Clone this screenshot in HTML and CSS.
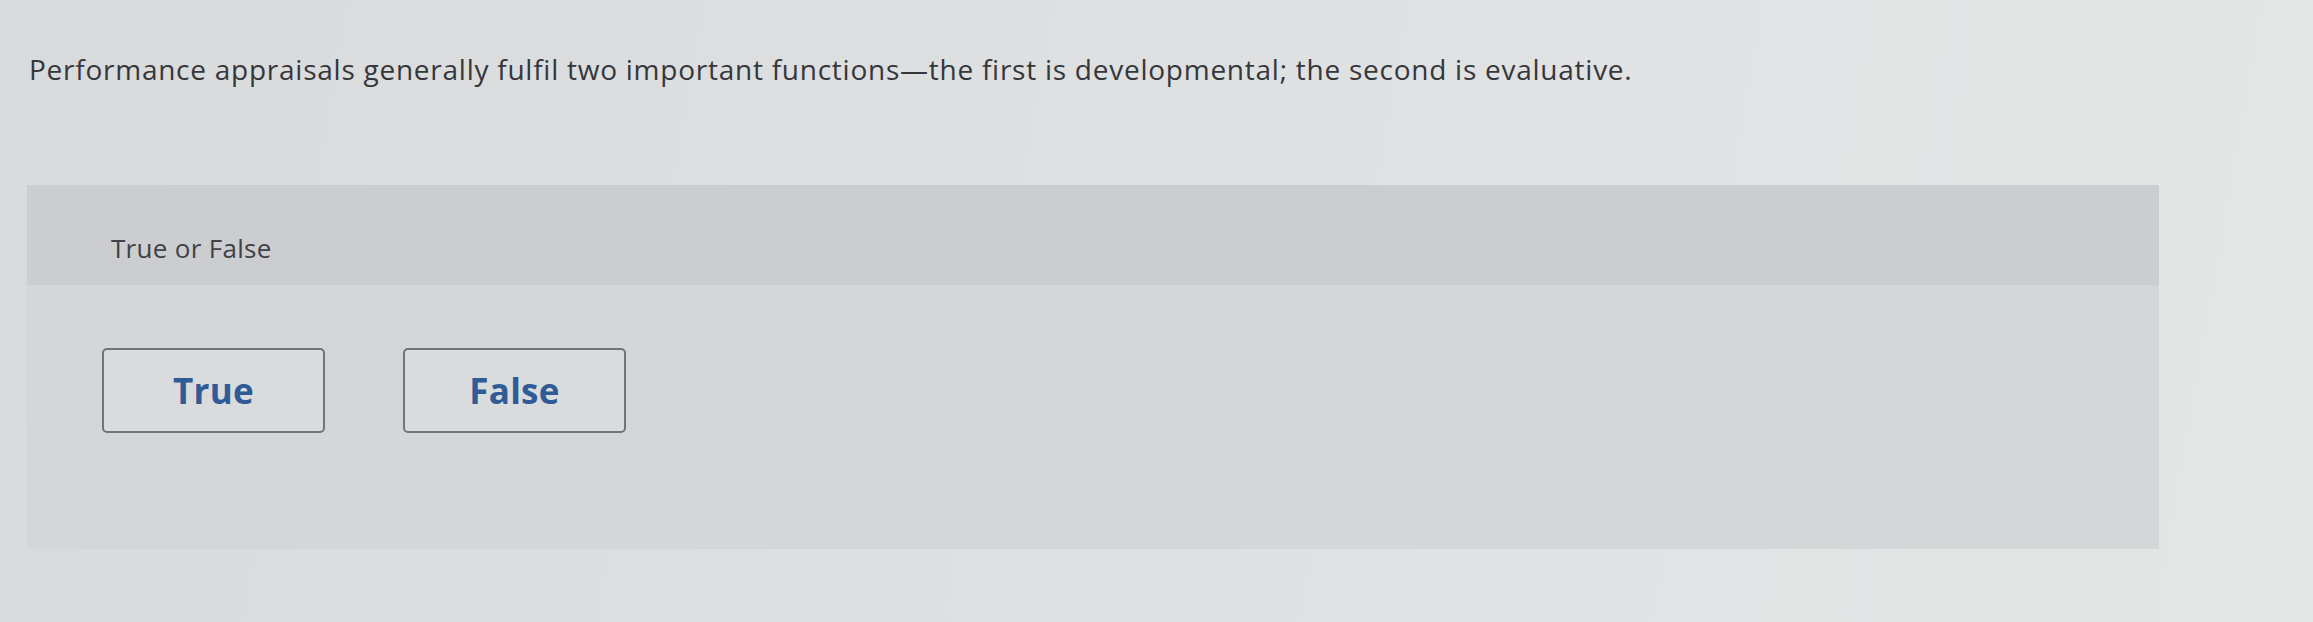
FILE: index.html
```html
<!DOCTYPE html>
<html lang="en">
<head>
    <meta charset="UTF-8">
    <meta name="viewport" content="width=device-width, initial-scale=1.0">
    <title>Question</title>
    <link rel="stylesheet" href="styles.css">
</head>
<body>
    <div class="question-page">
        <p class="question-text">Performance appraisals generally fulfil two important functions—the first is developmental; the second is evaluative.</p>

        <div class="answer-panel">
            <div class="answer-header">True or False</div>
            <div class="answer-body">
                <button class="choice-button">True</button>
                <button class="choice-button">False</button>
            </div>
        </div>
    </div>
</body>
</html>
```

FILE: styles.css
```css
body {
    font-family: 'Open Sans', Arial, sans-serif;
    font-variant-ligatures: none;
    margin: 0;
    padding: 0;
    background: linear-gradient(100deg, #d9dadc 0%, #dfe0e2 50%, #e4e6e6 100%);
    color: #35373b;
    min-height: 622px;
}
.question-page {
    padding: 50px 0 0 29px;
}
.question-text {
    margin: 0;
    font-size: 28px;
    font-weight: 500;
    line-height: 38px;
    letter-spacing: 0.75px;
    color: #35373b;
}
.answer-panel {
    margin-top: 97px;
    width: 2132px;
    margin-left: -2px;
    background-color: #d5d6d8;
}
.answer-header {
    height: 100px;
    box-sizing: border-box;
    padding: 48px 0 0 84px;
    font-size: 26px;
    line-height: 30px;
    letter-spacing: 0.3px;
    color: #404246;
    background-color: #cccdd0;
}
.answer-body {
    display: flex;
    gap: 78px;
    padding: 63px 0 0 75px;
    height: 264px;
    box-sizing: border-box;
}
.choice-button {
    width: 223px;
    height: 85px;
    border: 2px solid #717477;
    border-radius: 5px;
    background-color: #dadbdd;
    font-family: 'Open Sans', Arial, sans-serif;
    font-size: 35px;
    font-weight: bold;
    letter-spacing: 0.3px;
    color: #2f5b96;
    cursor: pointer;
}
```
